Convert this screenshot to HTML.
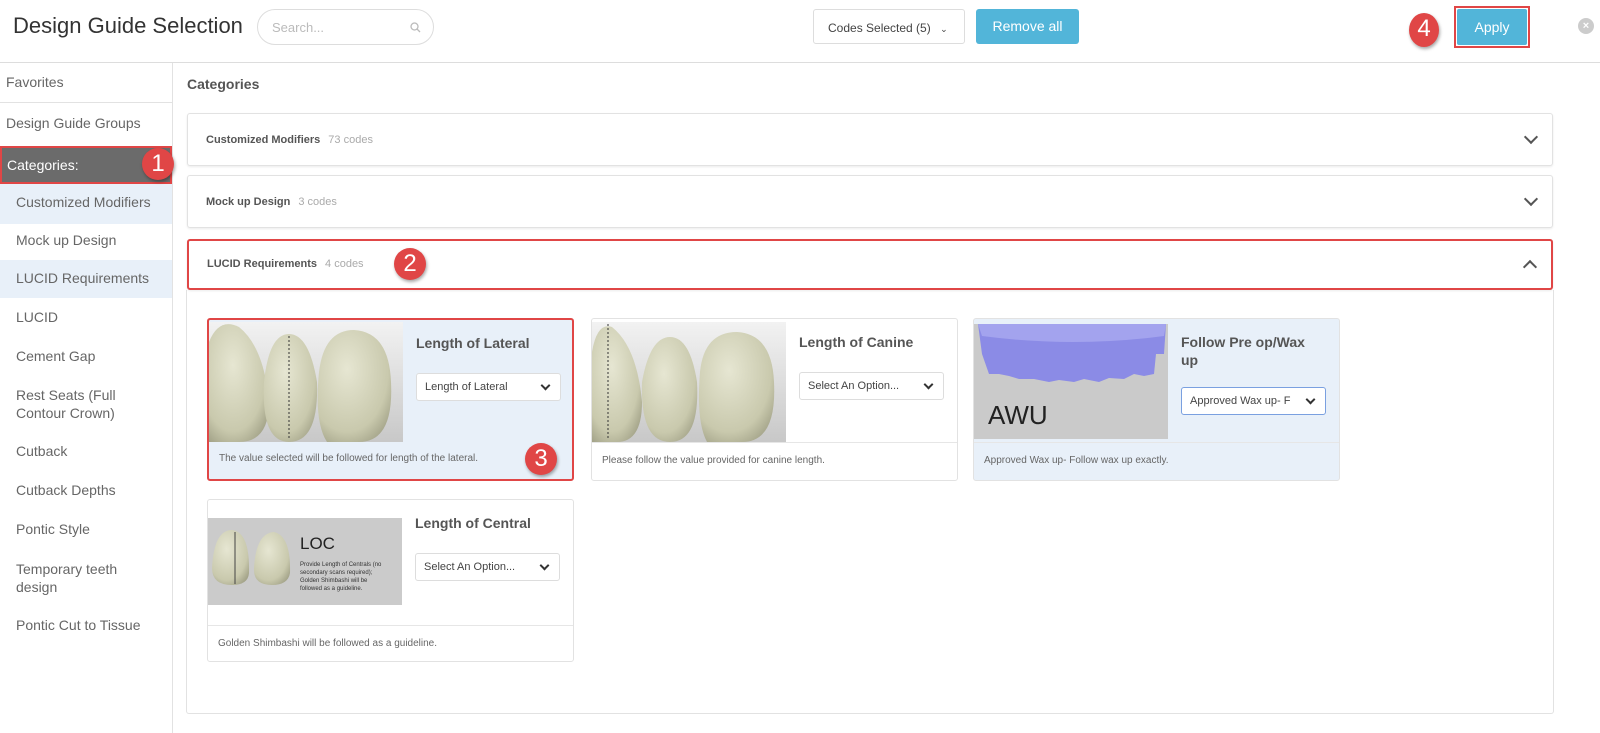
<!DOCTYPE html>
<html><head><meta charset="utf-8"><style>
*{box-sizing:border-box;margin:0;padding:0}
body{width:1600px;height:733px;overflow:hidden;background:#fff;font-family:"Liberation Sans",sans-serif;color:#555;position:relative}
.abs{position:absolute}
.badge{position:absolute;width:32px;height:32px;border-radius:50%;background:#e04646;color:#fff;font-size:24px;text-align:center;line-height:32px;box-shadow:1px 2px 3px rgba(0,0,0,.35)}
.side div{position:absolute;left:0;width:172px;font-size:14px;color:#666;white-space:nowrap}
.acc{position:absolute;left:187px;width:1366px;border:1px solid #e2e2e2;border-radius:3px;box-shadow:0 1px 2px rgba(0,0,0,.08);background:#fff}
.acc b{position:absolute;left:18px;font-size:11px;color:#555}
.acc span{font-weight:normal;color:#aaa;margin-left:8px}
.chev{position:absolute;right:16px;width:10px;height:10px;border-right:2px solid #555;border-bottom:2px solid #555}
.card{position:absolute;width:367px;height:163px;border:1px solid #e2e2e2;border-radius:3px;background:#fff}
.card.sel{background:#e8f0f9}
.card h4{position:absolute;left:207px;top:14px;font-size:14px;color:#555;width:135px;line-height:18px}
.dd{position:absolute;left:207px;top:53px;width:145px;height:28px;border:1px solid #ddd;border-radius:3px;background:#fff;font-size:11px;color:#444;padding:7px 8px;white-space:nowrap;overflow:hidden}
.dd i{position:absolute;right:11px;top:8px;width:7px;height:7px;border-right:2px solid #333;border-bottom:2px solid #333;transform:rotate(45deg)}
.foot{position:absolute;left:0;right:0;bottom:0;height:38px;border-top:1px solid #e6e6e6;font-size:10px;color:#666;padding:12px 10px}
.img{position:absolute;left:0;width:194px}
</style></head><body>
<div class="abs" style="left:13px;top:13px;font-size:22px;color:#333">Design Guide Selection</div>
<div class="abs" style="left:257px;top:9px;width:177px;height:36px;border:1px solid #ddd;border-radius:18px;font-size:13px;color:#bbb;padding:10px 14px">Search...
<svg class="abs" style="right:12px;top:12px" width="11" height="11"><circle cx="4.5" cy="4.5" r="3.5" fill="none" stroke="#bbb" stroke-width="1.3"/><line x1="7" y1="7" x2="10" y2="10" stroke="#bbb" stroke-width="1.3"/></svg></div>
<div class="abs" style="left:813px;top:9px;width:152px;height:35px;border:1px solid #ddd;border-radius:3px;font-size:12px;color:#444;padding:11px 14px">Codes Selected (5) <span style="margin-left:6px;font-size:9px">⌄</span></div>
<div class="abs" style="left:976px;top:9px;width:103px;height:35px;background:#52b5d9;border-radius:3px;color:#fff;font-size:14px;text-align:center;line-height:35px">Remove all</div>
<div class="badge" style="left:1409px;top:13px;width:30px;height:34px;border-radius:50%">4</div>
<div class="abs" style="left:1454px;top:6px;width:76px;height:42px;border:2px solid #e04646"></div>
<div class="abs" style="left:1457px;top:9px;width:70px;height:36px;background:#52b5d9;color:#fff;font-size:14px;text-align:center;line-height:36px;border-radius:2px">Apply</div>
<div class="abs" style="left:1578px;top:18px;width:16px;height:16px;border-radius:50%;background:#ccc;color:#fff;font-size:11px;text-align:center;line-height:16px;font-weight:bold">×</div>
<div class="abs" style="left:0;top:62px;width:1600px;height:1px;background:#ddd"></div>
<div class="abs" style="left:172px;top:63px;width:1px;height:670px;background:#e2e2e2"></div>
<div class="side">
<div style="top:62px;height:41px;padding:12px 6px;border-bottom:1px solid #e2e2e2">Favorites</div>
<div style="top:103px;height:43px;padding:12px 6px">Design Guide Groups</div>
<div style="top:146px;height:38px;background:#6b6b6b;color:#fff;padding:9px 5px;border:2px solid #e04646">Categories:</div>
<div style="top:184px;height:40px;background:#e8f0f9;padding:10px 16px">Customized Modifiers</div>
<div style="top:224px;height:36px;padding:8px 16px">Mock up Design</div>
<div style="top:260px;height:38px;background:#e8f0f9;padding:10px 16px">LUCID Requirements</div>
<div style="top:309px;padding:0 16px">LUCID</div>
<div style="top:348px;padding:0 16px">Cement Gap</div>
<div style="top:386px;padding:0 16px;line-height:18px">Rest Seats (Full<br>Contour Crown)</div>
<div style="top:443px;padding:0 16px">Cutback</div>
<div style="top:482px;padding:0 16px">Cutback Depths</div>
<div style="top:521px;padding:0 16px">Pontic Style</div>
<div style="top:560px;padding:0 16px;line-height:18px">Temporary teeth<br>design</div>
<div style="top:617px;padding:0 16px">Pontic Cut to Tissue</div>
</div>
<div class="badge" style="left:142px;top:148px">1</div>
<div class="abs" style="left:187px;top:76px;font-size:14px;font-weight:bold;color:#555">Categories</div>
<div class="abs" style="left:186px;top:290px;width:1368px;height:424px;border:1px solid #e2e2e2;border-top:none;border-radius:0 0 3px 3px"></div>
<div class="acc" style="top:113px;height:53px"><b style="top:20px">Customized Modifiers<span>73 codes</span></b><div class="chev" style="top:18px;transform:rotate(45deg)"></div></div>
<div class="acc" style="top:175px;height:53px"><b style="top:20px">Mock up Design<span>3 codes</span></b><div class="chev" style="top:18px;transform:rotate(45deg)"></div></div>
<div class="acc" style="top:239px;height:51px;border:2px solid #e04646"><b style="top:17px">LUCID Requirements<span>4 codes</span></b><div class="chev" style="top:21px;transform:rotate(-135deg)"></div></div>
<div class="badge" style="left:394px;top:248px">2</div>
<svg width="0" height="0" style="position:absolute"><defs>
<linearGradient id="bg" x1="0" y1="0" x2="0" y2="1"><stop offset="0" stop-color="#f2f2f2"/><stop offset="1" stop-color="#c8c8c8"/></linearGradient>
<radialGradient id="tooth" cx=".4" cy=".35" r=".8"><stop offset="0" stop-color="#e6e6d2"/><stop offset=".7" stop-color="#c9c9ad"/><stop offset="1" stop-color="#9a9a80"/></radialGradient>
</defs></svg>
<div class="card sel" style="left:207px;top:318px;border:2px solid #e04646">
<svg class="img" style="top:2px" width="194" height="120"><rect width="194" height="120" fill="url(#bg)"/>
<path d="M0 20 Q10 -5 30 5 Q55 25 60 80 Q60 120 30 120 L0 120Z" fill="url(#tooth)"/>
<path d="M55 60 Q60 12 80 12 Q100 12 108 60 Q110 120 80 120 Q52 120 55 60Z" fill="url(#tooth)"/>
<path d="M110 50 Q115 8 145 8 Q180 10 182 60 Q185 120 150 120 L118 120 Q105 100 110 50Z" fill="url(#tooth)"/>
<line x1="80" y1="14" x2="80" y2="118" stroke="#333" stroke-dasharray="2 2"/></svg>
<h4>Length of Lateral</h4><div class="dd">Length of Lateral<i></i></div>
<div class="foot" style="border-top:none">The value selected will be followed for length of the lateral.</div></div>
<div class="badge" style="left:525px;top:443px">3</div>
<div class="card" style="left:591px;top:318px">
<svg class="img" style="top:3px" width="194" height="120"><rect width="194" height="120" fill="url(#bg)"/>
<path d="M0 30 Q5 0 20 5 Q45 25 50 80 Q50 120 25 120 L0 120Z" fill="url(#tooth)"/>
<path d="M50 60 Q58 15 78 15 Q98 15 105 60 Q108 120 78 120 Q48 120 50 60Z" fill="url(#tooth)"/>
<path d="M108 50 Q112 10 145 10 Q180 12 182 60 Q185 120 150 120 L115 120 Q104 100 108 50Z" fill="url(#tooth)"/>
<line x1="16" y1="2" x2="16" y2="118" stroke="#333" stroke-dasharray="2 2"/></svg>
<h4>Length of Canine</h4><div class="dd">Select An Option...<i></i></div>
<div class="foot">Please follow the value provided for canine length.</div></div>
<div class="card sel" style="left:973px;top:318px">
<svg class="img" style="top:5px" width="194" height="115"><rect width="194" height="115" fill="#cacaca"/>
<path d="M4 0 L192 0 L190 30 L182 30 L180 50 L170 52 L160 50 L150 55 L135 54 L125 58 L110 55 L100 58 L85 56 L75 58 L60 55 L45 55 L35 52 L25 50 L15 50 L8 30Z" fill="#8b8be6"/>
<path d="M4 0 L192 0 L190 12 Q100 24 8 12Z" fill="#a3a3ee"/>
<text x="14" y="100" font-family="Liberation Sans" font-size="26" fill="#222">AWU</text></svg>
<h4>Follow Pre op/Wax up</h4><div class="dd" style="top:68px;border-color:#7aa0e0">Approved Wax up- F<i></i></div>
<div class="foot">Approved Wax up- Follow wax up exactly.</div></div>
<div class="card" style="left:207px;top:499px">
<svg class="img" style="top:18px" width="194" height="87"><rect width="194" height="87" fill="#cbcbcb"/>
<path d="M4 50 Q6 12 24 12 Q42 14 41 55 Q40 67 24 67 Q4 67 4 50Z" fill="url(#tooth)"/>
<path d="M46 50 Q48 15 66 14 Q83 18 82 55 Q80 67 64 67 Q45 67 46 50Z" fill="url(#tooth)"/>
<line x1="27" y1="14" x2="27" y2="66" stroke="#444"/>
<text x="92" y="31" font-family="Liberation Sans" font-size="17" fill="#222">LOC</text>
<text font-family="Liberation Sans" font-size="6" fill="#333"><tspan x="92" y="48">Provide Length of Centrals (no</tspan><tspan x="92" y="56">secondary scans required);</tspan><tspan x="92" y="64">Golden Shimbashi will be</tspan><tspan x="92" y="72">followed as a guideline.</tspan></text></svg>
<h4>Length of Central</h4><div class="dd">Select An Option...<i></i></div>
<div class="foot" style="height:36px">Golden Shimbashi will be followed as a guideline.</div></div>
</body></html>
